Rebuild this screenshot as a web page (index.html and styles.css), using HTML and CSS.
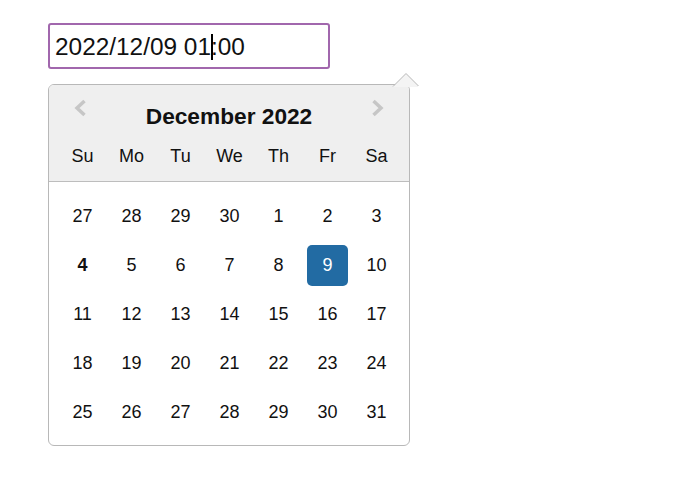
FILE: index.html
```html
<!DOCTYPE html>
<html>
<head>
<meta charset="utf-8">
<link rel="stylesheet" href="styles.css">
</head>
<body>
<div class="wrap">
  <div class="field">2022/12/09 01<span class="caret"></span>:00</div>
  <div class="picker">
    <svg class="pointer" width="28" height="16" viewBox="0 0 28 16">
      <polygon points="1,15.5 14,2.5 26,14.5 26,16 1,16" fill="#f4f4f4"/>
      <polyline points="1,15.5 14,2.5 26.5,15" fill="none" stroke="#b8b8b8" stroke-width="1"/>
    </svg>
    <div class="head">
      <div class="title-row">
        <div class="nav">
          <svg width="16" height="18" viewBox="0 0 16 18"><polyline points="12.5,2 5,9 12.5,16" fill="none" stroke="#c6c6c6" stroke-width="3.5"/></svg>
        </div>
        <div class="title">December 2022</div>
        <div class="nav">
          <svg width="16" height="18" viewBox="0 0 16 18"><polyline points="3.5,2 11,9 3.5,16" fill="none" stroke="#c6c6c6" stroke-width="3.5"/></svg>
        </div>
      </div>
      <div class="grid dow">
        <div>Su</div><div>Mo</div><div>Tu</div><div>We</div><div>Th</div><div>Fr</div><div>Sa</div>
      </div>
    </div>
    <div class="grid days">
      <div>27</div><div>28</div><div>29</div><div>30</div><div>1</div><div>2</div><div>3</div>
      <div class="today">4</div><div>5</div><div>6</div><div>7</div><div>8</div><div class="sel">9</div><div>10</div>
      <div>11</div><div>12</div><div>13</div><div>14</div><div>15</div><div>16</div><div>17</div>
      <div>18</div><div>19</div><div>20</div><div>21</div><div>22</div><div>23</div><div>24</div>
      <div>25</div><div>26</div><div>27</div><div>28</div><div>29</div><div>30</div><div>31</div>
    </div>
  </div>
</div>
</body>
</html>
```
FILE: styles.css
```css
html, body {
  margin: 0;
  padding: 0;
  background: #fff;
}
body {
  font-family: "Liberation Sans", Arial, Helvetica, sans-serif;
  color: #111;
}
.wrap {
  padding: 23px 0 0 48px;
}
.field {
  box-sizing: border-box;
  width: 282px;
  height: 46px;
  border: 2px solid #a167ad;
  border-radius: 3px;
  padding: 1px 0 0 5px;
  font-size: 24.4px;
  line-height: 41px;
  color: #111;
  white-space: nowrap;
}
.caret {
  display: inline-block;
  width: 0;
  height: 26px;
  border-left: 2px solid #000;
  margin-left: 0;
  margin-right: -2px;
  vertical-align: -5px;
}
.picker {
  position: relative;
  box-sizing: border-box;
  width: 362px;
  margin-top: 15px;
  border: 1px solid #b8b8b8;
  border-radius: 6px;
  background: #fff;
}
.pointer {
  position: absolute;
  left: 343px;
  top: -14px;
  overflow: visible;
}
.head {
  background: #efefef;
  border-radius: 5px 5px 0 0;
  border-bottom: 1px solid #bdbdbd;
  padding: 8px 0 8px;
}
.title-row {
  display: flex;
  justify-content: space-between;
  padding: 0 8px;
}
.nav {
  width: 46px;
  height: 30px;
  display: flex;
  align-items: center;
  justify-content: center;
}
.title {
  font-size: 22.7px;
  font-weight: bold;
  line-height: 46px;
  color: #111;
}
.grid {
  display: grid;
  grid-template-columns: repeat(7, 41px);
  column-gap: 8px;
  padding-left: 13px;
}
.dow {
  font-size: 18px;
  line-height: 34px;
  text-align: center;
}
.days {
  row-gap: 8px;
  padding-top: 14px;
  padding-bottom: 12px;
  font-size: 18px;
}
.days div {
  height: 41px;
  line-height: 41px;
  text-align: center;
  border-radius: 5px;
}
.days .today {
  font-weight: bold;
}
.days .sel {
  background: #226ba3;
  color: #fff;
}
```
